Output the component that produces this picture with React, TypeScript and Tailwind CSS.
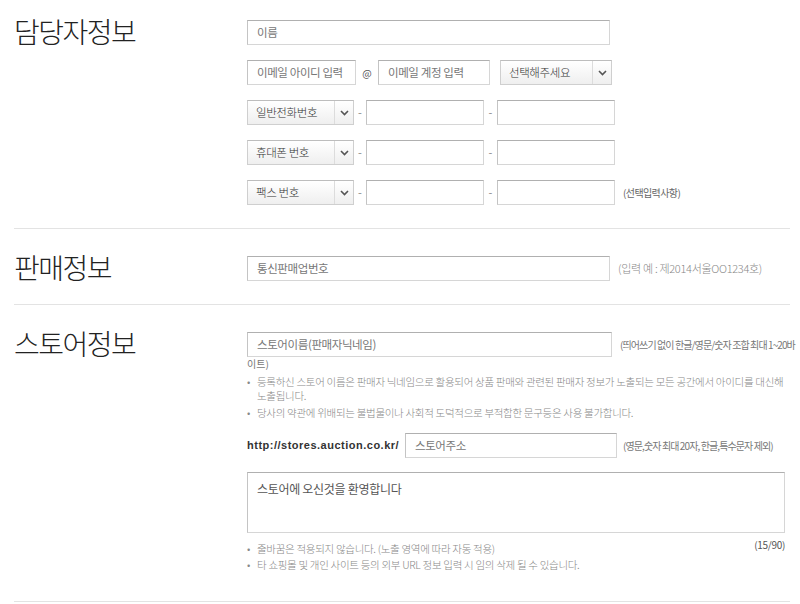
import { ReactNode } from 'react'

const font = { fontFamily: '"Noto Sans CJK KR", "Noto Sans", sans-serif' }

function Chevron() {
  return (
    <svg width="9" height="6" viewBox="0 0 9 6" fill="none">
      <path d="M1 1l3.5 3.5L8 1" stroke="#555" strokeWidth="1.6" />
    </svg>
  )
}

function TextBox({ width, value = '', className = '' }: { width: string; value?: string; className?: string }) {
  return (
    <div
      className={`${width} h-[25px] shrink-0 overflow-hidden whitespace-nowrap border border-[#d6d6d6] border-t-[#b0b0b0] border-l-[#c4c4c4] bg-white px-[9px] flex items-center text-[11.5px] text-[#777] tracking-[-0.4px] ${className}`}
    >
      {value}
    </div>
  )
}

function SelectBox({ width, label }: { width: string; label: string }) {
  return (
    <div
      className={`${width} h-[25px] shrink-0 flex border border-[#cfcfcf] border-t-[#bdbdbd] bg-gradient-to-b from-white to-[#efefef]`}
    >
      <div className="flex-1 flex items-center pl-[8px] pt-[1px] whitespace-nowrap text-[11.5px] font-light text-[#333] tracking-[-0.4px]">
        {label}
      </div>
      <div className="w-[19px] flex items-center justify-center border-l border-[#dcdcdc]">
        <Chevron />
      </div>
    </div>
  )
}

function PhoneRow({ label, note }: { label: string; note?: string }) {
  return (
    <div className="flex items-center">
      <SelectBox width="w-[107px]" label={label} />
      <div className="w-[12px] shrink-0 text-center text-[11px] text-[#888]">-</div>
      <TextBox width="w-[118px]" />
      <div className="w-[13px] shrink-0 text-center text-[11px] text-[#888]">-</div>
      <TextBox width="w-[118px]" />
      {note && <span className="ml-[8px] text-[10px] text-[#666] tracking-[-0.6px]">{note}</span>}
    </div>
  )
}

function Section({ title, children, className = '' }: { title: string; children: ReactNode; className?: string }) {
  return (
    <section className={`flex border-b border-[#e3e3e3] ${className}`}>
      <h2 className="w-[233px] shrink-0 text-[28px] leading-none font-light text-[#222] tracking-[-1.5px] mt-[-3px]">
        {title}
      </h2>
      <div className="flex-1">{children}</div>
    </section>
  )
}

function Note({ children }: { children: ReactNode }) {
  return (
    <li className="flex text-[10.5px] leading-[14px] font-light text-[#888] tracking-[-0.3px]">
      <span className="w-[10px] shrink-0">•</span>
      <span>{children}</span>
    </li>
  )
}

export default function App() {
  return (
    <div className="w-[800px] h-[604px] bg-white pl-[14px] pr-[10px] overflow-hidden" style={font}>
      <Section title="담당자정보" className="pt-[20px] pb-[23px]">
        <div className="flex flex-col gap-[15px]">
          <TextBox width="w-[363px]" value="이름" />
          <div className="flex items-center">
            <TextBox width="w-[109px]" value="이메일 아이디 입력" />
            <span className="w-[22px] text-center text-[10px] text-[#555]">@</span>
            <TextBox width="w-[112px]" value="이메일 계정 입력" />
            <div className="w-[10px]" />
            <SelectBox width="w-[112px]" label="선택해주세요" />
          </div>
          <PhoneRow label="일반전화번호" />
          <PhoneRow label="휴대폰 번호" />
          <PhoneRow label="팩스 번호" note="(선택입력사항)" />
        </div>
      </Section>

      <Section title="판매정보" className="pt-[27px] pb-[23px]">
        <div className="flex items-center">
          <TextBox width="w-[363px]" value="통신판매업번호" />
          <span className="ml-[8px] text-[11px] font-light text-[#888] tracking-[-0.3px]">(입력 예 : 제2014서울OO1234호)</span>
        </div>
      </Section>

      <Section title="스토어정보" className="pt-[27px] h-[297px]">
        <div className="flex items-center">
          <TextBox width="w-[365px]" value="스토어이름(판매자닉네임)" />
          <span className="ml-[8px] text-[10px] text-[#777] tracking-[-0.9px] whitespace-nowrap">
            (띄어쓰기 없이 한글/영문/숫자 조합 최대 1~20바
          </span>
        </div>
        <div className="text-[10px] leading-[14px] text-[#777]">이트)</div>
        <ul className="mt-[4px] flex flex-col gap-[3px]">
          <Note>
            등록하신 스토어 이름은 판매자 닉네임으로 활용되어 상품 판매와 관련된 판매자 정보가 노출되는 모든 공간에서 아이디를 대신해
            <br />
            노출됩니다.
          </Note>
          <Note>당사의 약관에 위배되는 불법물이나 사회적 도덕적으로 부적합한 문구등은 사용 불가합니다.</Note>
        </ul>

        <div className="flex items-center mt-[13px]">
          <span
            className="w-[158px] shrink-0 text-[11px] font-bold text-[#333] tracking-[0.5px]"
            style={{ fontFamily: '"Liberation Sans", Arial, sans-serif' }}
          >
            http://stores.auction.co.kr/
          </span>
          <TextBox width="w-[212px]" value="스토어주소" />
          <span className="ml-[6px] text-[10px] text-[#777] tracking-[-0.9px] whitespace-nowrap">
            (영문,숫자 최대 20자, 한글,특수문자 제외)
          </span>
        </div>

        <div className="mt-[14px] w-[538px] h-[61px] border border-[#d6d6d6] border-t-[#b0b0b0] border-l-[#c4c4c4] px-[9px] py-[7px] text-[12px] text-[#555] tracking-[-0.3px]">
          스토어에 오신것을 환영합니다
        </div>
        <div className="flex w-[538px]">
          <ul className="flex-1 pt-[9px] flex flex-col gap-[2px]">
            <Note>줄바꿈은 적용되지 않습니다. (노출 영역에 따라 자동 적용)</Note>
            <Note>타 쇼핑몰 및 개인 사이트 등의 외부 URL 정보 입력 시 임의 삭제 될 수 있습니다.</Note>
          </ul>
          <span className="pt-[4px] text-[10px] text-[#555] tracking-[-0.3px]">(15/90)</span>
        </div>
      </Section>
    </div>
  )
}
